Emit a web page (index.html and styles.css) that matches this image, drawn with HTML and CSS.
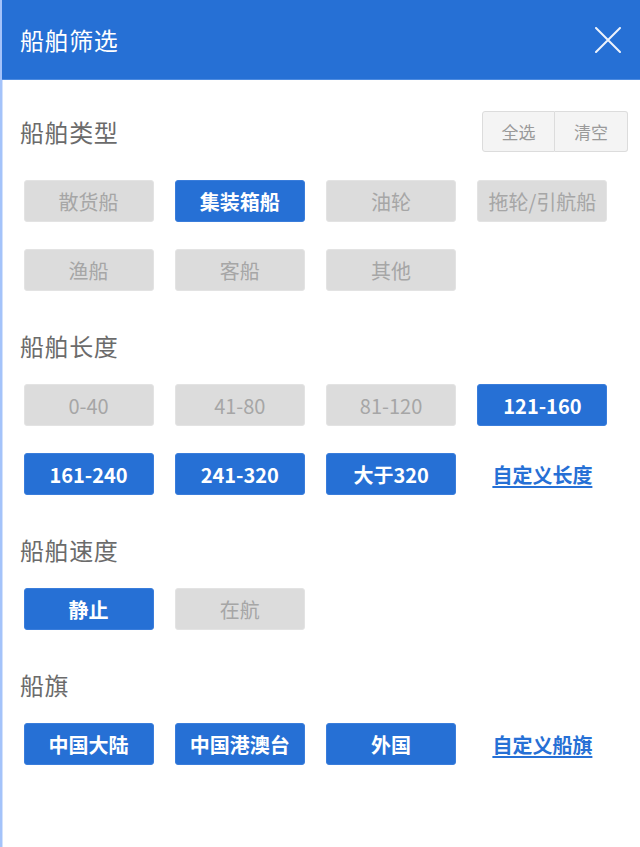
FILE: index.html
```html
<!DOCTYPE html>
<html lang="zh-CN">
<head>
<meta charset="utf-8">
<title>船舶筛选</title>
<link rel="stylesheet" href="styles.css">
</head>
<body>
<div class="panel">
  <header class="panel-header">
    <h1 class="panel-title">船舶筛选</h1>
    <button class="close-btn" aria-label="关闭">
      <svg width="26" height="26" viewBox="0 0 26 26"><path d="M1 1 L25 25 M25 1 L1 25" stroke="#eef3fc" stroke-width="2" fill="none" stroke-linecap="round"/></svg>
    </button>
  </header>
  <main class="panel-body">
    <section class="section">
      <div class="section-head">
        <h2 class="section-title">船舶类型</h2>
        <div class="tool-group">
          <button class="tool-btn">全选</button>
          <button class="tool-btn">清空</button>
        </div>
      </div>
      <div class="chip-grid first">
        <button class="chip">散货船</button>
        <button class="chip on">集装箱船</button>
        <button class="chip">油轮</button>
        <button class="chip">拖轮/引航船</button>
        <button class="chip">渔船</button>
        <button class="chip">客船</button>
        <button class="chip">其他</button>
      </div>
    </section>
    <section class="section">
      <h2 class="section-title">船舶长度</h2>
      <div class="chip-grid">
        <button class="chip">0-40</button>
        <button class="chip">41-80</button>
        <button class="chip">81-120</button>
        <button class="chip on">121-160</button>
        <button class="chip on">161-240</button>
        <button class="chip on">241-320</button>
        <button class="chip on">大于320</button>
        <a class="custom-link" href="#">自定义长度</a>
      </div>
    </section>
    <section class="section">
      <h2 class="section-title">船舶速度</h2>
      <div class="chip-grid">
        <button class="chip on">静止</button>
        <button class="chip">在航</button>
      </div>
    </section>
    <section class="section">
      <h2 class="section-title">船旗</h2>
      <div class="chip-grid">
        <button class="chip on">中国大陆</button>
        <button class="chip on">中国港澳台</button>
        <button class="chip on">外国</button>
        <a class="custom-link" href="#">自定义船旗</a>
      </div>
    </section>
  </main>
</div>
</body>
</html>
```

FILE: styles.css
```css
* { box-sizing: border-box; }
html, body { margin: 0; padding: 0; }
body {
  width: 640px;
  height: 847px;
  background: #fff;
  font-family: "Noto Sans CJK SC", "Noto Sans", sans-serif;
  overflow: hidden;
}
.panel {
  height: 847px;
  border-left: 2px solid #a4c3fa;
  box-shadow: inset 1px 0 0 #d3e2fc;
}
.panel-header {
  height: 80px;
  background: #2670d5;
  border-bottom: 1px solid #4d8be0;
  display: flex;
  align-items: center;
  justify-content: space-between;
  padding: 0 19px 0 18px;
}
.panel-title {
  margin: 0;
  color: #fff;
  font-size: 24px;
  font-weight: 400;
  letter-spacing: 0.6px;
}
.close-btn {
  background: none;
  border: 0;
  padding: 0;
  width: 26px;
  height: 26px;
  display: flex;
  cursor: pointer;
}
.panel-body {
  padding: 31px 12px 0 18px;
}
.section + .section { margin-top: 35px; }
.section-head {
  display: flex;
  align-items: center;
  justify-content: space-between;
  height: 41px;
}
.section-title {
  margin: 0;
  height: 40px;
  line-height: 40px;
  font-size: 24px;
  font-weight: 400;
  color: #6b6b6b;
  letter-spacing: 0.6px;
}
.tool-group { display: flex; }
.tool-btn {
  width: 73px;
  height: 41px;
  background: #f4f4f4;
  border: 1px solid #dcdcdc;
  color: #9a9a9a;
  font-family: inherit;
  font-size: 17px;
  padding: 0;
}
.tool-btn:first-child { border-radius: 3px 0 0 3px; }
.tool-btn:last-child { border-radius: 0 3px 3px 0; border-left: 0; }
.chip-grid {
  display: grid;
  grid-template-columns: repeat(4, 130px);
  column-gap: 21.3px;
  row-gap: 27px;
  margin: 18px 0 0 3.5px;
}
.chip-grid.first { margin-top: 28px; }
.chip {
  height: 42px;
  border: 1px solid #e3e3e3;
  border-radius: 3px;
  background: #dcdcdc;
  color: #a6a6a6;
  font-family: inherit;
  font-size: 20px;
  font-weight: 400;
  padding: 0;
  white-space: nowrap;
}
.chip.on {
  background: #2670d5;
  border-color: #3a7ddb;
  color: #fff;
  font-weight: 700;
}
.custom-link {
  display: flex;
  align-items: center;
  justify-content: center;
  height: 42px;
  color: #2670d5;
  font-size: 20px;
  font-weight: 700;
  text-decoration: underline;
  text-underline-offset: 3px;
}
```
